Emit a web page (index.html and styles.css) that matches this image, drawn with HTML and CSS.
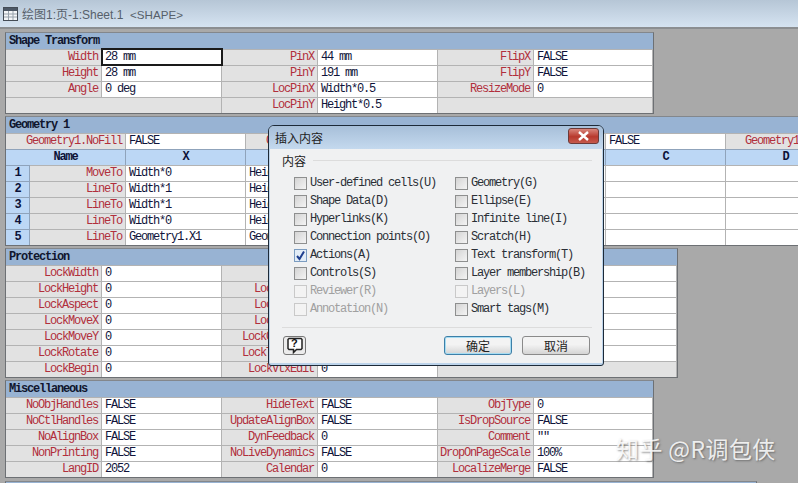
FILE: index.html
```html
<!DOCTYPE html>
<html lang="zh">
<head>
<meta charset="utf-8">
<title>Shape</title>
<link rel="stylesheet" href="styles.css">
</head>
<body>
<header class="titlebar">
  <svg class="doc-icon" width="15" height="14" viewBox="0 0 15 14"><rect x="0.5" y="0.5" width="14" height="13" fill="#f4f6f8" stroke="#444c56"/><rect x="1" y="1" width="13" height="3" fill="#4d5866"/><path d="M1 7h13M1 10h13M5.5 4v9M10 4v9" stroke="#98a2ac"/></svg>
  <span class="title-text">绘图1:页-1:Sheet.1&nbsp; <span class="title-tag">&lt;SHAPE&gt;</span></span>
</header>
<main class="sheet">
  <section class="panel w648">
    <h2 class="panel-head">Shape Transform</h2>
    <div class="grid g3">
      <span class="k">Width</span><span class="v focus">28 mm</span><span class="k">PinX</span><span class="v">44 mm</span><span class="k">FlipX</span><span class="v">FALSE</span>
      <span class="k">Height</span><span class="v">28 mm</span><span class="k">PinY</span><span class="v">191 mm</span><span class="k">FlipY</span><span class="v">FALSE</span>
      <span class="k">Angle</span><span class="v">0 deg</span><span class="k">LocPinX</span><span class="v">Width*0.5</span><span class="k">ResizeMode</span><span class="v">0</span>
      <span class="k wide"></span><span class="k">LocPinY</span><span class="v">Height*0.5</span><span class="k wide"></span>
    </div>
  </section>
  <section class="panel wfull">
    <h2 class="panel-head">Geometry 1</h2>
    <div class="grid geo-top">
      <span class="k">Geometry1.NoFill</span><span class="v">FALSE</span><span class="k">Geometry1.NoLine</span><span class="v">FALSE</span><span class="k">Geometry1.NoShow</span><span class="v">FALSE</span><span class="k left">Geometry1.NoSnap</span>
    </div>
    <div class="grid geo">
      <span class="h wide">Name</span><span class="h">X</span><span class="h">Y</span><span class="h">A</span><span class="h">B</span><span class="h">C</span><span class="h">D</span>
      <span class="h">1</span><span class="k">MoveTo</span><span class="v">Width*0</span><span class="v">Height*0</span><span class="v"></span><span class="v"></span><span class="v"></span><span class="v"></span>
      <span class="h">2</span><span class="k">LineTo</span><span class="v">Width*1</span><span class="v">Height*0</span><span class="v"></span><span class="v"></span><span class="v"></span><span class="v"></span>
      <span class="h">3</span><span class="k">LineTo</span><span class="v">Width*1</span><span class="v">Height*1</span><span class="v"></span><span class="v"></span><span class="v"></span><span class="v"></span>
      <span class="h">4</span><span class="k">LineTo</span><span class="v">Width*0</span><span class="v">Height*1</span><span class="v"></span><span class="v"></span><span class="v"></span><span class="v"></span>
      <span class="h">5</span><span class="k">LineTo</span><span class="v">Geometry1.X1</span><span class="v">Geometry1.Y1</span><span class="v"></span><span class="v"></span><span class="v"></span><span class="v"></span>
    </div>
  </section>
  <section class="panel w672">
    <h2 class="panel-head">Protection</h2>
    <div class="grid g4">
      <span class="k">LockWidth</span><span class="v">0</span><span class="k">LockEnd</span><span class="v">0</span><span class="k"></span><span class="v"></span>
      <span class="k">LockHeight</span><span class="v">0</span><span class="k">LockDelete</span><span class="v">0</span><span class="k"></span><span class="v"></span>
      <span class="k">LockAspect</span><span class="v">0</span><span class="k">LockSelect</span><span class="v">0</span><span class="k"></span><span class="v"></span>
      <span class="k">LockMoveX</span><span class="v">0</span><span class="k">LockFormat</span><span class="v">0</span><span class="k"></span><span class="v"></span>
      <span class="k">LockMoveY</span><span class="v">0</span><span class="k">LockCustProp</span><span class="v">0</span><span class="k"></span><span class="v"></span>
      <span class="k">LockRotate</span><span class="v">0</span><span class="k">LockTextEdit</span><span class="v">0</span><span class="k"></span><span class="v"></span>
      <span class="k">LockBegin</span><span class="v">0</span><span class="k">LockVtxEdit</span><span class="v">0</span><span class="k wide"></span>
    </div>
  </section>
  <section class="panel w648">
    <h2 class="panel-head">Miscellaneous</h2>
    <div class="grid g3">
      <span class="k">NoObjHandles</span><span class="v">FALSE</span><span class="k">HideText</span><span class="v">FALSE</span><span class="k">ObjType</span><span class="v">0</span>
      <span class="k">NoCtlHandles</span><span class="v">FALSE</span><span class="k">UpdateAlignBox</span><span class="v">FALSE</span><span class="k">IsDropSource</span><span class="v">FALSE</span>
      <span class="k">NoAlignBox</span><span class="v">FALSE</span><span class="k">DynFeedback</span><span class="v">0</span><span class="k">Comment</span><span class="v">""</span>
      <span class="k">NonPrinting</span><span class="v">FALSE</span><span class="k">NoLiveDynamics</span><span class="v">FALSE</span><span class="k">DropOnPageScale</span><span class="v">100%</span>
      <span class="k">LangID</span><span class="v">2052</span><span class="k">Calendar</span><span class="v">0</span><span class="k">LocalizeMerge</span><span class="v">FALSE</span>
    </div>
  </section>
  <section class="panel w751 stub"></section>
</main>
<div class="dialog">
  <div class="dlg-title">
    <span class="dlg-name">插入内容</span>
    <button class="dlg-close" type="button"><svg width="15" height="10" viewBox="0 0 15 10"><path d="M3 1l9 8M12 1L3 9" fill="none" stroke="#fff" stroke-width="2.4"/></svg></button>
  </div>
  <div class="dlg-body">
    <div class="group-head"><span>内容</span><i class="rule"></i></div>
    <div class="checks">
      <label class="chk"><i class="box"></i>User-defined cells(U)</label><label class="chk"><i class="box"></i>Geometry(G)</label>
      <label class="chk"><i class="box"></i>Shape Data(D)</label><label class="chk"><i class="box"></i>Ellipse(E)</label>
      <label class="chk"><i class="box"></i>Hyperlinks(K)</label><label class="chk"><i class="box"></i>Infinite line(I)</label>
      <label class="chk"><i class="box"></i>Connection points(O)</label><label class="chk"><i class="box"></i>Scratch(H)</label>
      <label class="chk"><i class="box on"><svg width="11" height="11" viewBox="0 0 11 11"><path d="M2 6l2.5 3L9 1.5" fill="none" stroke="#1f3f8f" stroke-width="2"/></svg></i>Actions(A)</label><label class="chk"><i class="box"></i>Text transform(T)</label>
      <label class="chk"><i class="box"></i>Controls(S)</label><label class="chk"><i class="box"></i>Layer membership(B)</label>
      <label class="chk off"><i class="box"></i>Reviewer(R)</label><label class="chk off"><i class="box"></i>Layers(L)</label>
      <label class="chk off"><i class="box"></i>Annotation(N)</label><label class="chk"><i class="box"></i>Smart tags(M)</label>
    </div>
    <div class="sep"></div>
    <div class="dlg-foot">
      <button class="help" type="button"><svg width="16" height="17" viewBox="0 0 16 17"><path d="M2 1.5h12l1 1v9l-1 1H9.5l-3 3v-3H2l-1-1v-9z" fill="#fff" stroke="#222" stroke-width="1.5"/></svg><b>?</b></button>
      <span class="spacer"></span>
      <button class="btn primary" type="button">确定</button>
      <button class="btn" type="button">取消</button>
    </div>
  </div>
</div>
<div class="watermark">知乎 @R调包侠</div>
</body>
</html>
```
FILE: styles.css
```css
* { box-sizing: border-box; }
html, body { margin: 0; height: 100%; }
body {
  width: 798px; height: 483px; overflow: hidden; position: relative;
  background: #a9a9a9;
  font-family: "Liberation Mono", "Noto Sans CJK SC", monospace;
  font-size: 12px; letter-spacing: -1.2px;
}
.titlebar {
  height: 29px; display: flex; align-items: center; gap: 4px; padding: 0 0 0 3px;
  background: linear-gradient(#b6c6d6, #d5e3f1);
  border-bottom: 2px solid #8b8e91;
}
.doc-icon { flex: none; margin-top: 1px; }
.title-text {
  font-family: "Liberation Sans", "Noto Sans CJK SC", sans-serif;
  font-size: 12px; letter-spacing: 0; color: #56606a;
}
.title-tag { font-size: 11.6px; }
.sheet { display: flex; flex-direction: column; gap: 2px; padding: 3px 0 0 5px; }
.panel { border: 1px solid #6d7074; border-top-color: #83878c; background: #b5b5b5; flex: none; }
.w648 { width: 649px; }
.w672 { width: 673px; }
.w751 { width: 752px; }
.wfull { width: 793px; overflow: hidden; border-right: 0; }
.stub { margin-top: 1px; height: 17px; background: #98b3d3; }
.panel-head {
  margin: 0; height: 16px; line-height: 17px; padding-left: 3px;
  background: #98b3d3; color: #10162e;
  font-size: 12px; font-weight: bold; letter-spacing: -1.2px; font-family: inherit;
}
.grid { display: grid; grid-auto-rows: 16px; }
.g3 { grid-template-columns: 96px 120px 96px 120px 96px 119px; }
.g4 { grid-template-columns: 96px 120px 96px 120px 96px 143px; }
.geo-top { grid-template-columns: repeat(7, 120px); }
.geo { grid-template-columns: 24px 96px repeat(6, 120px); }
.k, .v, .h {
  border-top: 1px solid #b3b3b3; border-right: 1px solid #b3b3b3;
  line-height: 14px; white-space: nowrap; overflow: hidden;
}
.k { background: #e2e2e2; color: #b12f3c; text-align: right; padding-right: 3px; }
.k.left { text-align: left; padding-left: 19px; }
.v { background: #fff; color: #10143a; padding-left: 3px; }
.h {
  background: #bcd7f5; color: #0c1238; font-weight: bold; text-align: center;
  border-color: #8fa3bb;
}
.wide { grid-column: span 2; }
.focus { outline: 2px solid #1a1a1a; outline-offset: -1px; position: relative; z-index: 1; overflow: visible; }
.dialog {
  position: absolute; left: 268px; top: 125px; width: 336px; height: 241px; z-index: 2;
  border: 1px solid #1d2a38; border-radius: 6px 6px 3px 3px;
  background: #bcd3ea; padding: 0 1px 2px; color: #333;
}
.dlg-title {
  height: 23px; display: flex; align-items: center; justify-content: space-between;
  background: linear-gradient(#a7bfd9, #c4d9ee); margin: 0 -1px; padding: 0 4px 0 6px;
  border-radius: 5px 5px 0 0;
}
.dlg-name { font-family: "Noto Sans CJK SC", sans-serif; font-size: 12px; letter-spacing: 0; color: #222; }
.dlg-close {
  width: 31px; height: 16px; padding: 0; border: 1px solid #6c3a38; border-radius: 3px;
  background: linear-gradient(#d9867c, #b8392d 55%, #c65a4d);
  display: flex; align-items: center; justify-content: center; margin-top: -4px;
}
.dlg-body { height: 214px; background: #f0f1f2; padding: 3px 10px 0 12px; }
.group-head {
  display: flex; align-items: center; gap: 7px; height: 16px;
  font-family: "Noto Sans CJK SC", sans-serif; font-size: 12px; letter-spacing: 0; color: #222;
}
.rule { flex: 1; height: 1px; background: #dcdcdc; }
.checks { display: grid; grid-template-columns: 161px 1fr; grid-auto-rows: 18px; padding: 6px 0 0 12px; }
.chk { display: flex; align-items: center; gap: 3px; color: #2b2f36; white-space: nowrap; }
.box { width: 13px; height: 13px; flex: none; border: 1px solid #8e8f8f; background: linear-gradient(135deg, #d4d4d4, #f4f4f4); display: block; }
.box.on { background: #e3edf7; border-color: #7b9cc0; }
.box svg { display: block; }
.off { color: #a0a0a0; }
.off .box { background: #f3f3f3; border-color: #c9c9c9; }
.sep { height: 1px; background: #dcdcdc; margin-top: 9px; }
.dlg-foot { display: flex; align-items: center; gap: 10px; padding: 8px 2px 0 1px; }
.spacer { flex: 1; }
.help {
  position: relative; width: 23px; height: 19px; padding: 0; border: 1px solid #777; border-radius: 3px;
  background: #ececec; display: flex; align-items: center; justify-content: center;
}
.help b { position: absolute; left: 7px; top: 0; font: bold 11px/13px "Liberation Sans", sans-serif; letter-spacing: 0; color: #111; }
.btn {
  width: 68px; height: 19px; padding: 0; border: 1px solid #8a8a8a; border-radius: 3px;
  background: linear-gradient(#f3f3f3 45%, #d4d4d4);
  font-family: "Noto Sans CJK SC", sans-serif; font-size: 12px; line-height: 16px; letter-spacing: 0; color: #222;
}
.btn.primary { border-color: #3c7fa8; box-shadow: inset 0 0 0 1px #a6dcf2; }
.watermark {
  position: absolute; left: 616px; top: 433px; z-index: 3;
  font-family: "Noto Sans CJK SC", sans-serif; font-size: 23px; letter-spacing: 0.4px; line-height: 30px;
  color: rgba(255,255,255,.85); text-shadow: 1px 1px 2px rgba(60,60,60,.55); white-space: nowrap;
}
```
